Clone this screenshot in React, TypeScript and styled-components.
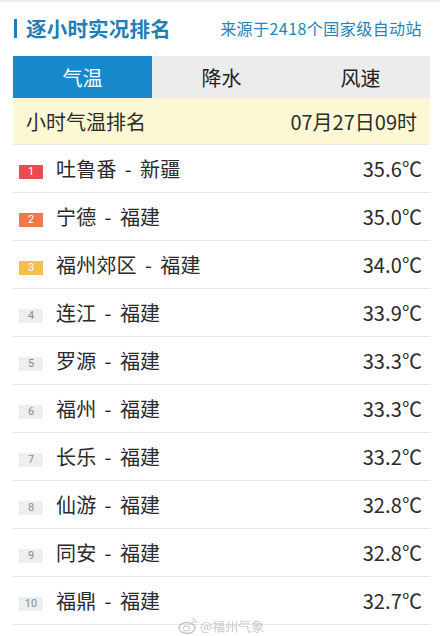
import React, { useState } from "react";
import styled, { createGlobalStyle } from "styled-components";

const Global = createGlobalStyle`
  html, body { margin: 0; padding: 0; background: #ffffff; }
  body { font-family: "Noto Sans CJK SC", "Noto Sans", sans-serif; }
  * { box-sizing: border-box; }
`;

const Page = styled.div`
  position: relative;
  width: 440px;
  height: 636px;
  border-top: 2px solid #ececec;
  padding: 0 10px 0 13px;
  overflow: hidden;
`;

const Header = styled.div`
  height: 54px;
  display: flex;
  align-items: center;
  justify-content: space-between;
  padding: 0 8px 2px 1px;
`;

const Title = styled.div`
  display: flex;
  align-items: center;
  gap: 9px;
  color: #1e7fb6;
  font-size: 20.5px;
  font-weight: 700;
  letter-spacing: 0.2px;
`;

const TitleBar = styled.span`
  width: 3px;
  height: 19px;
  background: #1e7fb6;
`;

const Source = styled.div`
  color: #2484b8;
  font-size: 16px;
  letter-spacing: 0.45px;
`;

const Tabs = styled.div`
  display: grid;
  grid-template-columns: 139px 1fr 1fr;
  height: 42px;
  background: #ececec;
`;

const Tab = styled.button<{ $active: boolean }>`
  border: none;
  margin: 0;
  padding: 0;
  font-family: inherit;
  font-size: 20px;
  color: ${(p) => (p.$active ? "#ffffff" : "#222222")};
  background: ${(p) => (p.$active ? "#1889cd" : "transparent")};
  display: flex;
  align-items: center;
  justify-content: center;
  cursor: pointer;
`;

const SubHeader = styled.div`
  height: 47px;
  background: #fdf8d4;
  display: flex;
  align-items: center;
  justify-content: space-between;
  padding: 0 13px 0 13px;
  font-size: 20px;
  color: #2b2b2b;
  border-bottom: 1px solid #efeadb;
`;

const Row = styled.div`
  height: 48px;
  display: flex;
  align-items: center;
  border-bottom: 1.5px solid #e4e4e4;
  padding: 0 8px 0 6px;
`;

const badgeColors: Record<number, string> = {
  1: "#ea4a52",
  2: "#f1784c",
  3: "#f6c04e",
};

const Badge = styled.span<{ $rank: number }>`
  width: 24px;
  height: 14px;
  margin-top: 6px;
  margin-right: 13px;
  display: flex;
  align-items: center;
  justify-content: center;
  font-size: 11px;
  line-height: 1;
  font-family: "Roboto", "Noto Sans", sans-serif;
  color: ${(p) => (badgeColors[p.$rank] ? "#ffffff" : "#8a8a8a")};
  background: ${(p) => badgeColors[p.$rank] ?? "#eeeeee"};
`;

const Name = styled.span`
  flex: 1;
  font-size: 20px;
  color: #2a2a2a;
  letter-spacing: 0.2px;
  word-spacing: 3.5px;
`;

const Temp = styled.span`
  font-size: 20px;
  color: #2a2a2a;
  letter-spacing: 0.1px;
`;

const Watermark = styled.div`
  position: absolute;
  left: 178px;
  top: 614px;
  display: flex;
  align-items: center;
  gap: 2px;
  color: #b8b8b8;
  font-size: 13px;
  opacity: 0.75;
  filter: blur(0.4px);
`;

const data = [
  ["吐鲁番 - 新疆", "35.6℃"],
  ["宁德 - 福建", "35.0℃"],
  ["福州郊区 - 福建", "34.0℃"],
  ["连江 - 福建", "33.9℃"],
  ["罗源 - 福建", "33.3℃"],
  ["福州 - 福建", "33.3℃"],
  ["长乐 - 福建", "33.2℃"],
  ["仙游 - 福建", "32.8℃"],
  ["同安 - 福建", "32.8℃"],
  ["福鼎 - 福建", "32.7℃"],
];

const tabs = ["气温", "降水", "风速"];

export default function App() {
  const [active, setActive] = useState(0);
  return (
    <>
      <Global />
      <Page>
        <Header>
          <Title>
            <TitleBar />
            逐小时实况排名
          </Title>
          <Source>来源于2418个国家级自动站</Source>
        </Header>
        <Tabs>
          {tabs.map((t, i) => (
            <Tab key={t} $active={i === active} onClick={() => setActive(i)}>
              {t}
            </Tab>
          ))}
        </Tabs>
        <SubHeader>
          <span>小时气温排名</span>
          <span>07月27日09时</span>
        </SubHeader>
        {data.map(([name, temp], i) => (
          <Row key={i}>
            <Badge $rank={i + 1}>{i + 1}</Badge>
            <Name>{name}</Name>
            <Temp>{temp}</Temp>
          </Row>
        ))}
        <Watermark>
          <svg width="20" height="17" viewBox="0 0 20 17">
            <ellipse cx="9" cy="11" rx="8" ry="5.5" fill="none" stroke="#b0b0b0" strokeWidth="1.3" />
            <ellipse cx="8.5" cy="11.5" rx="3.5" ry="2.5" fill="none" stroke="#b0b0b0" strokeWidth="1" />
            <path d="M14 2 a4 4 0 0 1 4 4" fill="none" stroke="#b0b0b0" strokeWidth="1.2" />
            <path d="M14 4.5 a1.8 1.8 0 0 1 1.8 1.8" fill="none" stroke="#b0b0b0" strokeWidth="1" />
          </svg>
          <span>@福州气象</span>
        </Watermark>
      </Page>
    </>
  );
}
